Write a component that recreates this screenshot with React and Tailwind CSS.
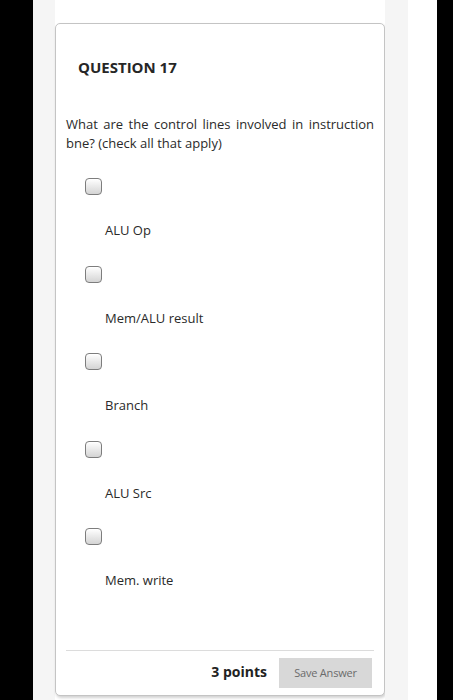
import React from "react";

const options = ["ALU Op", "Mem/ALU result", "Branch", "ALU Src", "Mem. write"];

function Checkbox() {
    return (
        <div className="w-[17px] h-[17px] rounded-[4px] border border-[#7d7d7d] bg-gradient-to-b from-[#ffffff] to-[#d4d4d4] shadow-[inset_0_1px_0_#fff]" />
    );
}

export default function App() {
    return (
        <div className="flex w-[453px] h-[700px] bg-black overflow-hidden font-['Open_Sans',sans-serif] text-[#333]">
            {/* left frame */}
            <div className="w-[33px] shrink-0 bg-black" />
            <div className="w-[22px] shrink-0 bg-[#f5f5f5]" />

            {/* main column */}
            <div className="w-[330px] shrink-0 bg-white pt-[23px] pb-[4px] flex flex-col">
                <div className="flex-1 flex flex-col bg-white border border-[#c4c4c4] rounded-[5px] shadow-[1px_2px_3px_rgba(0,0,0,0.18)] pb-[7px]">
                    <h2 className="ml-[22px] mt-[32px] text-[15px] leading-[22px] font-bold text-[#262626]">QUESTION 17</h2>

                    <p className="mx-[10px] mt-[37px] text-[13px] leading-[19px] text-justify text-[#2a2a2a]">
                        What are the control lines involved in instruction bne? (check all that apply)
                    </p>

                    <div className="mt-[25px] flex flex-col">
                        {options.map((opt, i) => (
                            <div key={opt} className={i === 0 ? "" : "mt-[25.5px]"}>
                                <div className="ml-[29px]">
                                    <Checkbox />
                                </div>
                                <div className="ml-[49px] mt-[26px] text-[13px] leading-[19px] text-[#2a2a2a]">{opt}</div>
                            </div>
                        ))}
                    </div>

                    <div className="flex-1" />

                    {/* footer */}
                    <div className="mx-[10px] border-t border-[#dcdcdc]" />
                    <div className="flex items-center justify-end gap-[12px] mt-[7px] mr-[12px]">
                        <span className="text-[14px] leading-[20px] font-bold text-[#222] -translate-y-[1px]">3 points</span>
                        <button className="w-[93px] h-[30px] bg-[#d8d8d8] text-[11px] text-[#6b6b6b] tracking-[-0.2px]">
                            Save Answer
                        </button>
                    </div>
                </div>
            </div>

            {/* right frame */}
            <div className="w-[23px] shrink-0 bg-[#f5f5f5]" />
            <div className="w-[29px] shrink-0 bg-white" />
            <div className="flex-1 bg-black" />
        </div>
    );
}
